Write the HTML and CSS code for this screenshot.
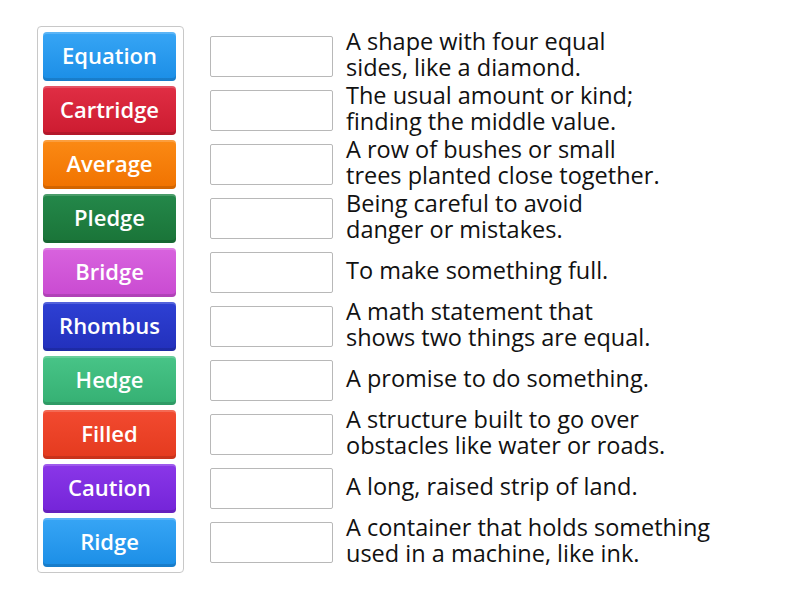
FILE: index.html
```html
<!DOCTYPE html>
<html>
<head>
<meta charset="utf-8">
<link rel="stylesheet" href="styles.css">
</head>
<body>
<div class="board">
  <div class="tiles">
    <div class="tile c1">Equation</div>
    <div class="tile c2">Cartridge</div>
    <div class="tile c3">Average</div>
    <div class="tile c4">Pledge</div>
    <div class="tile c5">Bridge</div>
    <div class="tile c6">Rhombus</div>
    <div class="tile c7">Hedge</div>
    <div class="tile c8">Filled</div>
    <div class="tile c9">Caution</div>
    <div class="tile c1">Ridge</div>
  </div>
  <div class="targets">
    <div class="row"><div class="box"></div><div class="def">A shape with four equal<br>sides, like a diamond.</div></div>
    <div class="row"><div class="box"></div><div class="def">The usual amount or kind;<br>finding the middle value.</div></div>
    <div class="row"><div class="box"></div><div class="def">A row of bushes or small<br>trees planted close together.</div></div>
    <div class="row"><div class="box"></div><div class="def">Being careful to avoid<br>danger or mistakes.</div></div>
    <div class="row"><div class="box"></div><div class="def">To make something full.</div></div>
    <div class="row"><div class="box"></div><div class="def">A math statement that<br>shows two things are equal.</div></div>
    <div class="row"><div class="box"></div><div class="def">A promise to do something.</div></div>
    <div class="row"><div class="box"></div><div class="def">A structure built to go over<br>obstacles like water or roads.</div></div>
    <div class="row"><div class="box"></div><div class="def">A long, raised strip of land.</div></div>
    <div class="row"><div class="box"></div><div class="def">A container that holds something<br>used in a machine, like ink.</div></div>
  </div>
</div>
</body>
</html>
```
FILE: styles.css
```css
html, body {
  margin: 0;
  padding: 0;
  background: #ffffff;
}
body {
  font-family: "Open Sans", "Noto Sans", sans-serif;
  color: #111111;
}
.board {
  display: flex;
  align-items: flex-start;
  padding: 26px 0 0 37px;
}
.tiles {
  display: flex;
  flex-direction: column;
  gap: 5px;
  padding: 5px 7px 5px 5px;
  border: 1px solid #c8c8c8;
  border-radius: 4px;
}
.tile {
  width: 133px;
  height: 49px;
  box-sizing: border-box;
  padding-bottom: 3px;
  border-radius: 4px;
  display: flex;
  align-items: center;
  justify-content: center;
  color: #ffffff;
  font-weight: 600;
  font-size: 22px;
  box-shadow: inset 0 -3px 0 rgba(0,0,0,0.12), inset 0 2px 0 rgba(255,255,255,0.18);
}
.c1 { background: linear-gradient(#37a5f5, #1b8ee6); }
.c2 { background: linear-gradient(#e02e44, #cc1b30); }
.c3 { background: linear-gradient(#fb8a14, #f07200); }
.c4 { background: linear-gradient(#24884a, #1a7438); }
.c5 { background: linear-gradient(#d863de, #c94ad1); }
.c6 { background: linear-gradient(#2e40d4, #2230bb); }
.c7 { background: linear-gradient(#48c487, #35b073); }
.c8 { background: linear-gradient(#f24a30, #e43a1e); }
.c9 { background: linear-gradient(#8a37e8, #7424d8); }
.targets {
  display: flex;
  flex-direction: column;
  gap: 5px;
  margin-top: 6px;
  margin-left: 26px;
}
.row {
  height: 49px;
  display: flex;
  align-items: center;
}
.box {
  width: 123px;
  height: 41px;
  box-sizing: border-box;
  border: 1px solid #b8b8b8;
  border-radius: 2px;
  background: #ffffff;
  flex: none;
}
.def {
  margin-left: 13px;
  margin-bottom: 5px;
  font-size: 23.5px;
  line-height: 26px;
  color: #111111;
  white-space: nowrap;
}
```
